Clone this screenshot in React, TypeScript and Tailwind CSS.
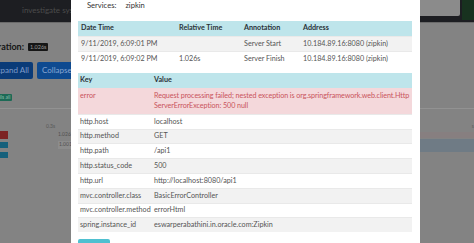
import React from "react";

const t1 = [
  { dt: "9/11/2019, 6:09:01 PM", rel: "", ann: "Server Start", addr: "10.184.89.16:8080 (zipkin)" },
  { dt: "9/11/2019, 6:09:02 PM", rel: "1.026s", ann: "Server Finish", addr: "10.184.89.16:8080 (zipkin)" },
];

const t2 = [
  ["http.host", "localhost"],
  ["http.method", "GET"],
  ["http.path", "/api1"],
  ["http.status_code", "500"],
  ["http.url", "http://localhost:8080/api1"],
  ["mvc.controller.class", "BasicErrorController"],
  ["mvc.controller.method", "errorHtml"],
  ["spring.instance_id", "eswarperabathini.in.oracle.com:Zipkin"],
];

export default function App() {
  return (
    <div className="relative w-[474px] h-[243px] overflow-hidden bg-[#838383] font-['Lato',sans-serif]">
      {/* dimmed background page */}
      <div className="flex flex-col">
        <div className="h-[23px] bg-[#1d1e22] flex items-start justify-between border-b border-[#6a6a6a]">
          <div className="pl-[22px] pt-[5px] text-[8px] leading-[10px] text-[#4c4c4c]">investigate system</div>
          <div className="flex items-start">
            <div className="w-[48px] h-[16px] bg-[#8b8b8b] rounded-br-[2px]" />
            <div className="w-[12px] h-[20px] ml-[2px] bg-[#18321f]" />
          </div>
        </div>
        <div className="flex items-center mt-[19px] h-[10px]">
          <span className="ml-[-14px] text-[9px] font-bold text-[#151515] leading-[10px]">Duration:</span>
          <span className="ml-[4px] px-[2px] h-[8px] rounded-[1px] bg-[#161616] text-[5.5px] leading-[8px] text-[#9a9a9a]">1.026s</span>
        </div>
        <div className="flex mt-[10px] gap-[4px] h-[17px]">
          <div className="ml-[-12px] w-[45px] bg-[#0a3b78] rounded-[2px] text-[8px] leading-[17px] text-[#7f9ccb] pl-[4px] whitespace-nowrap">Expand All</div>
          <div className="w-[50px] bg-[#0e4a90] rounded-[2px] text-[8px] leading-[17px] text-[#8aa7d3] pl-[5px] whitespace-nowrap">Collapse All</div>
        </div>
        <div className="flex mt-[15px]">
          <div className="ml-[-13px] h-[7px] px-[2px] bg-[#1d6a56] rounded-[1px] text-[5px] leading-[7px] text-[#8fbfb0] whitespace-nowrap">Details all</div>
        </div>
        <div className="mt-[7px] h-px bg-[#929292]" />
        <div className="flex mt-[14px] h-[7px]">
          <span className="ml-[46px] text-[5px] leading-[7px] text-[#585858]">0.3s</span>
          <span className="ml-auto mr-0 text-[5px] leading-[7px] text-[#5e5e5e]">s</span>
        </div>
        <div className="flex mt-[1px] h-[8px] items-center">
          <div className="w-[8px] h-[8px] bg-[#7c2323]" />
          <span className="ml-[50px] text-[5px] text-[#505050]">1.026</span>
          <div className="ml-auto w-[54px] h-[6px] bg-[#877f80]" />
        </div>
        <div className="flex mt-[3px] h-[6px] items-center">
          <div className="w-[8px] h-[6px] bg-[#16607b]" />
          <span className="ml-[50px] px-[1px] bg-[#8c8c8c] text-[5px] text-[#505050]">1.001</span>
          <div className="ml-auto w-[54px] h-[13px] bg-[#6f7b85]" />
        </div>
        <div className="flex mt-[4px] h-[6px]">
          <div className="w-[8px] h-[6px] bg-[#16607b]" />
        </div>
      </div>

      {/* modal */}
      <div className="absolute left-[71px] top-0 w-[349px] h-[260px] bg-white pl-[7px] pr-[8px] text-[7.2px] text-[#555]">
        <div className="h-[20.7px] pl-[9px] flex gap-[9px] text-[7.6px] leading-[10px] text-[#333]">
          <span>Services:</span>
          <span>zipkin</span>
        </div>
        <table className="w-full table-fixed border-collapse leading-[10px]">
          <colgroup>
            <col className="w-[98px]" />
            <col className="w-[65px]" />
            <col className="w-[59px]" />
            <col />
          </colgroup>
          <thead>
            <tr className="bg-[#bee5eb] text-[#2b3338] font-bold">
              <td className="pl-[3px] py-[2.65px]">Date Time</td>
              <td className="pl-[3px] py-[2.65px]">Relative Time</td>
              <td className="pl-[3px] py-[2.65px]">Annotation</td>
              <td className="pl-[3px] py-[2.65px]">Address</td>
            </tr>
          </thead>
          <tbody>
            {t1.map((r, i) => (
              <tr key={i} className={`border-t border-[#e9e9e9] ${i % 2 === 0 ? "bg-[#f2f2f2]" : "bg-white"}`}>
                <td className="pl-[3px] py-[1.9px] whitespace-nowrap">{r.dt}</td>
                <td className="pl-[3px] py-[1.9px]">{r.rel}</td>
                <td className="pl-[3px] py-[1.9px] whitespace-nowrap">{r.ann}</td>
                <td className="pl-[3px] py-[1.9px] whitespace-nowrap">{r.addr}</td>
              </tr>
            ))}
          </tbody>
        </table>

        <table className="w-full table-fixed border-collapse leading-[10px] mt-[7px]">
          <colgroup>
            <col className="w-[73px]" />
            <col />
          </colgroup>
          <thead>
            <tr className="bg-[#bee5eb] text-[#2b3338] font-bold">
              <td className="pl-[2px] py-[2.65px]">Key</td>
              <td className="pl-[3px] py-[2.65px]">Value</td>
            </tr>
          </thead>
          <tbody>
            <tr className="bg-[#f4d8db] text-[#c9545c]">
              <td className="pl-[2px] py-[3px] align-top">error</td>
              <td className="pl-[3px] py-[3px] whitespace-nowrap tracking-[-0.08px]">
                Request processing failed; nested exception is org.springframework.web.client.Http
                <br />
                ServerErrorException: 500 null
              </td>
            </tr>
            {t2.map(([k, v], i) => (
              <tr key={k} className={`border-t border-[#e9e9e9] ${i % 2 === 0 ? "bg-white" : "bg-[#f2f2f2]"}`}>
                <td className="pl-[2px] py-[1.9px] whitespace-nowrap">{k}</td>
                <td className="pl-[3px] py-[1.9px] whitespace-nowrap">{v}</td>
              </tr>
            ))}
          </tbody>
        </table>

        <div className="mt-[7px] w-[32px] h-[14px] rounded-[2px] bg-[#4fc0d0]" />
      </div>
    </div>
  );
}
